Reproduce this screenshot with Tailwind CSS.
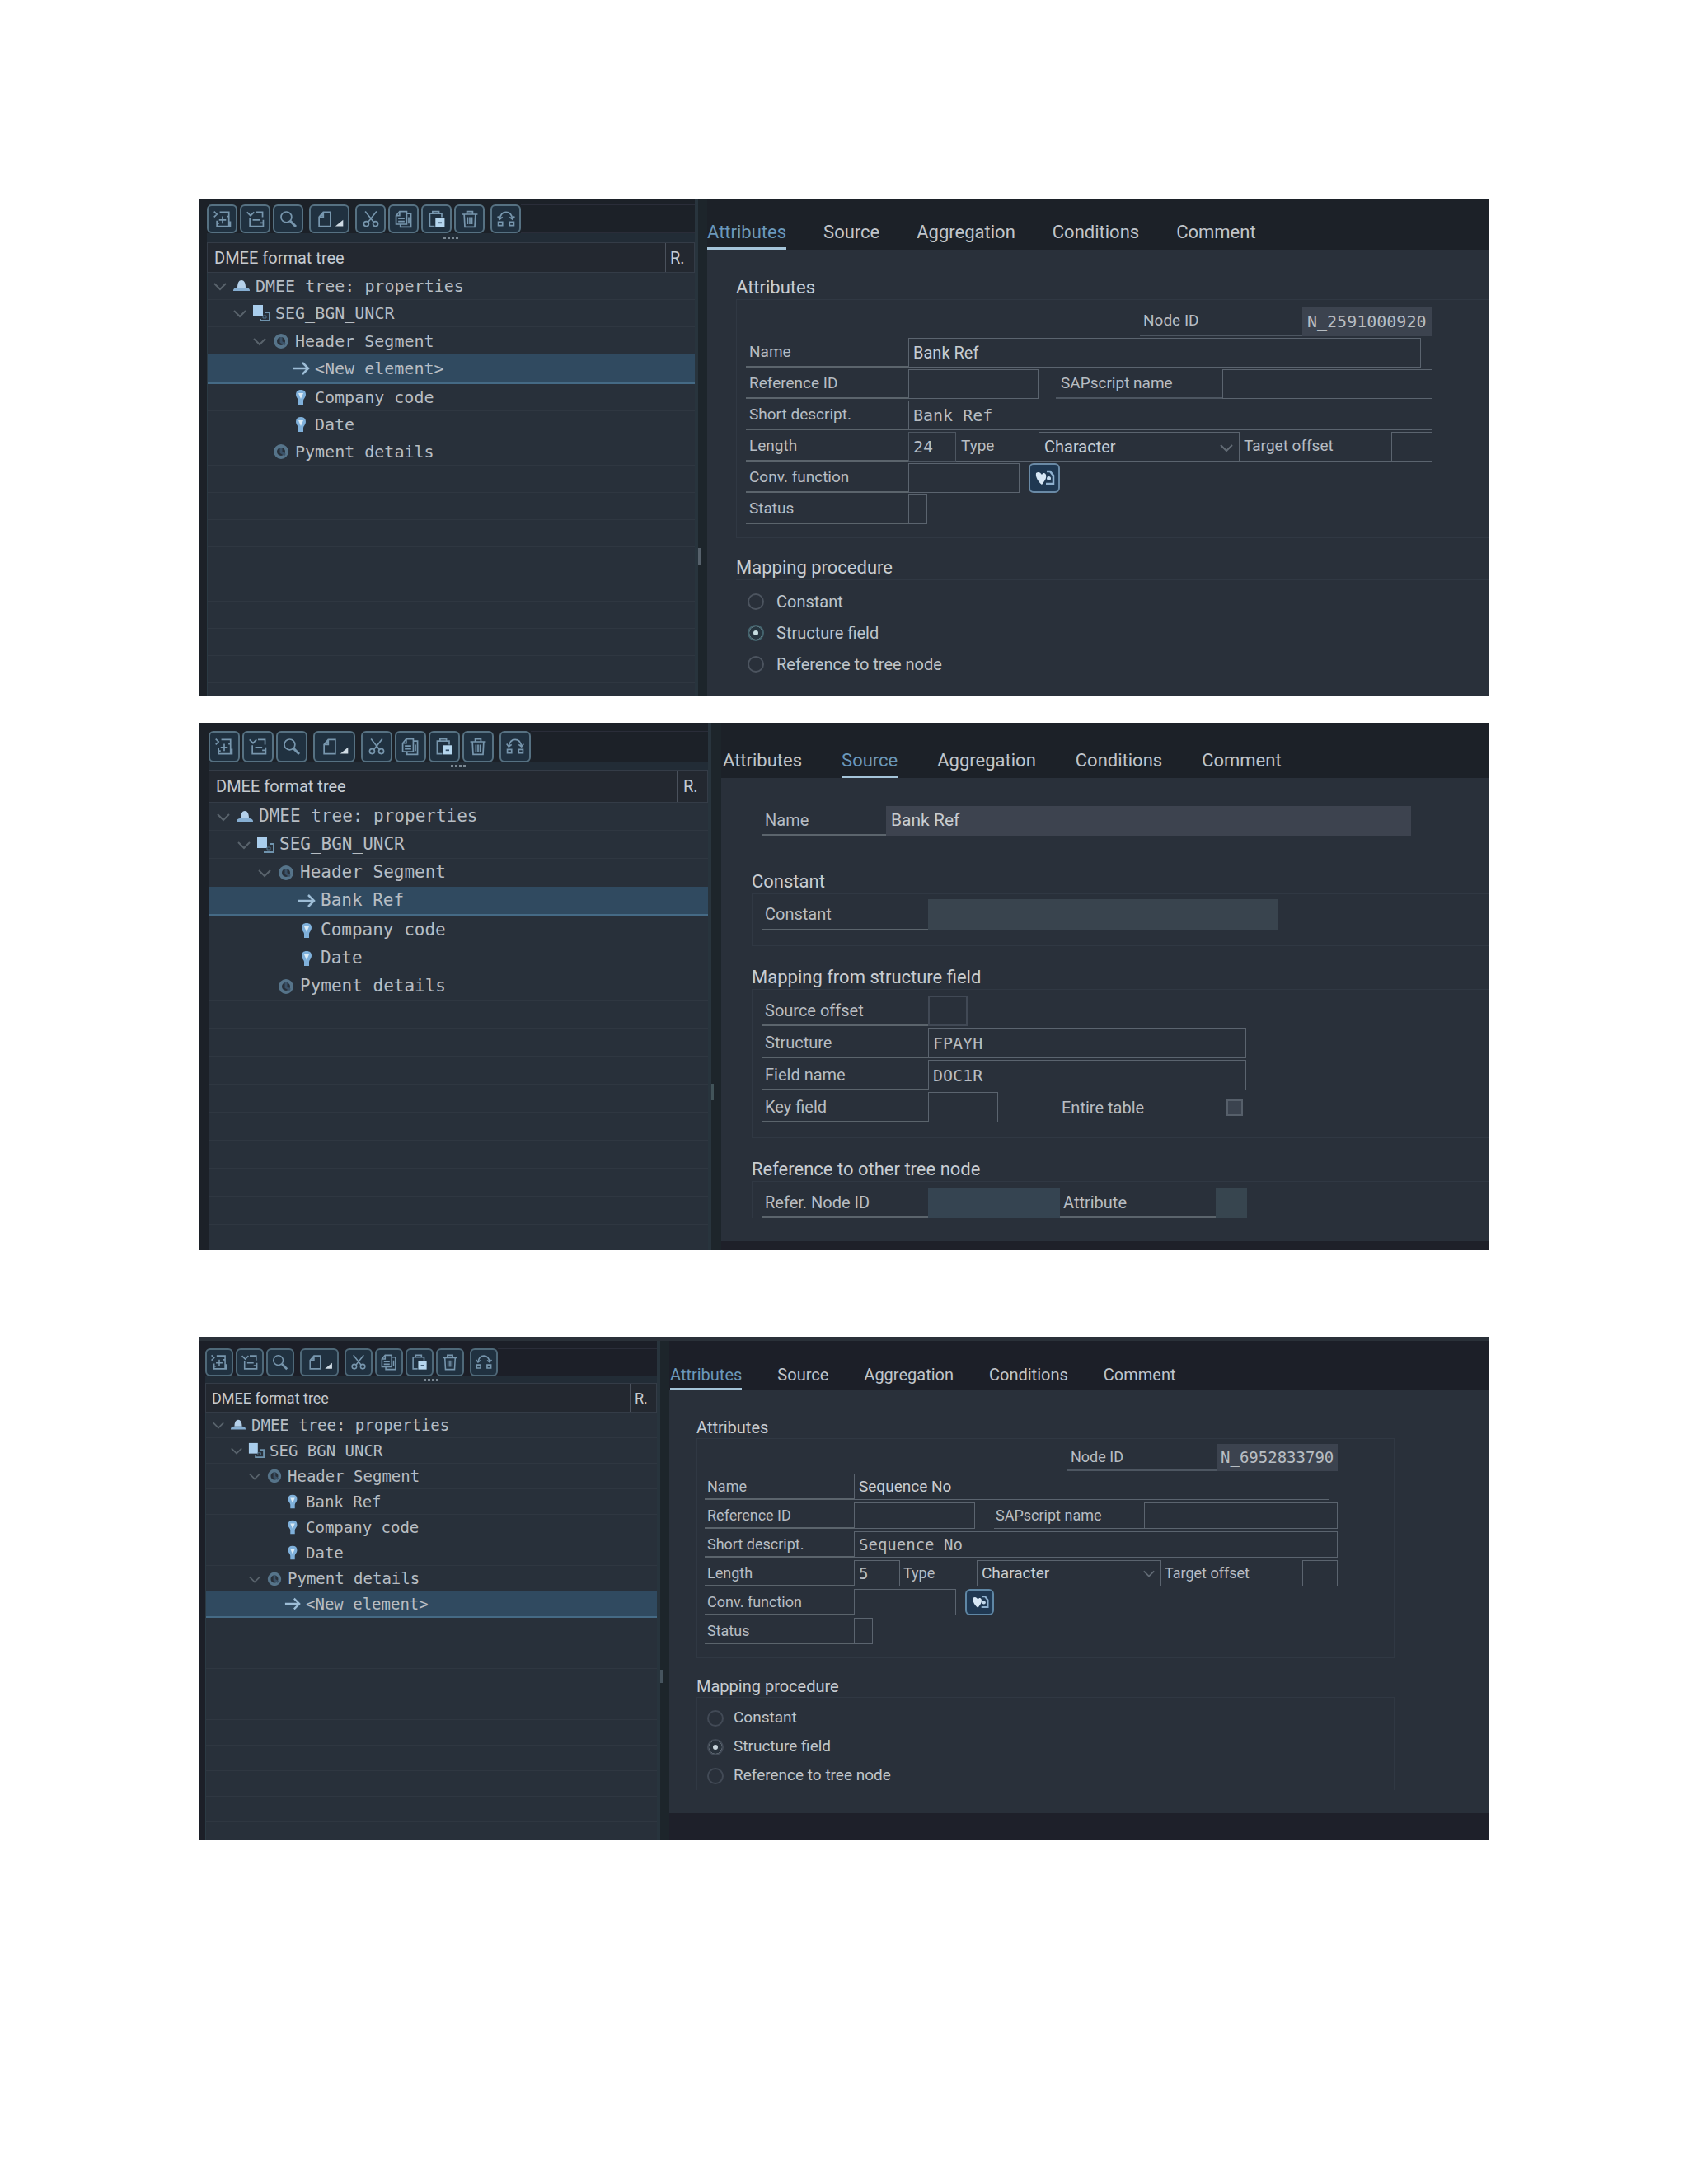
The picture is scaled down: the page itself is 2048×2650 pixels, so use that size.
<!DOCTYPE html>
<html lang="en">
<head>
	<meta charset="utf-8">
	<title>DMEE format tree</title>
	<script src="https://cdn.jsdelivr.net/npm/@tailwindcss/browser@4"></script>
</head>
<body class="min-h-screen bg-white px-[241px] pt-[241px] pb-[419px] font-['Roboto','Noto_Sans',sans-serif] text-[#b7bdc3]">

	<!-- icons shared by all three screens -->
	<svg class="hidden" xmlns="http://www.w3.org/2000/svg">
		<symbol id="i-expand" viewBox="0 0 28 28" fill="none" stroke="currentColor" stroke-width="2"><path d="M2 3l4 4-4 4M10 4h13v20H6v-8M18 24h7V17M14 10v10M9 15h10M6 20h3M20 10h4"/></symbol>
		<symbol id="i-collapse" viewBox="0 0 28 28" fill="none" stroke="currentColor" stroke-width="2"><path d="M2 4l5 5 5-5M14 4h10v7M6 12v12h19V15M10 15h10M20 19h4"/></symbol>
		<symbol id="i-search" viewBox="0 0 28 28" fill="none" stroke="currentColor" stroke-width="2"><circle cx="11" cy="11" r="7.5"/><path d="M16.500 16.500l8 8" stroke-width="3.500"/></symbol>
		<symbol id="i-new" viewBox="0 0 40 28"><path d="M11 4h10v20H5V11zM11 4v7H5" fill="none" stroke="currentColor" stroke-width="2"/><path d="M5 10l6-6v6z" fill="currentColor"/><path d="M39 15v9H28z" fill="#cfdbe4"/></symbol>
		<symbol id="i-cut" viewBox="0 0 28 28" fill="none" stroke="currentColor" stroke-width="2"><path d="M6 3l12 15M22 3L10 18"/><circle cx="7.500" cy="20.500" r="3.500"/><circle cx="20.500" cy="20.500" r="3.500"/></symbol>
		<symbol id="i-copy" viewBox="0 0 28 28" fill="none" stroke="currentColor" stroke-width="2"><path d="M8 3h10v18H3V9zM8 3v6H3M18 6h6v19H9v-4M6 13h9M6 17h9M21 11v9"/></symbol>
		<symbol id="i-paste" viewBox="0 0 28 28"><path d="M11 24H4V6h17v5M8 6V3h9v3" fill="none" stroke="currentColor" stroke-width="2"/><path d="M12 12h13v13H12z" fill="#b5d6ee"/><path d="M16 19h5" stroke="#35506a" stroke-width="2"/></symbol>
		<symbol id="i-trash" viewBox="0 0 28 28" fill="none" stroke="currentColor" stroke-width="2"><path d="M3 7h22M10 7V3h8v4M6 7l1 18h14l1-18M11 11v10M14 11v10M17 11v10"/></symbol>
		<symbol id="i-nodes" viewBox="0 0 28 28" fill="none" stroke="currentColor" stroke-width="2"><path d="M5 14C6 7 10 4 14 4s8 3 9 10M2 10l3 4 4-3M26 10l-3 4-4-3"/><path d="M3 18h6v5H3zM19 18h6v5h-6z"/></symbol>
		<symbol id="i-chevron" viewBox="0 0 18 18" fill="none" stroke="currentColor" stroke-width="2"><path d="M2 6l7 7 7-7"/></symbol>
		<symbol id="i-root" viewBox="0 0 22 22"><path d="M6 13c0-6 2-9 5-9s5 3 5 9z" fill="#b4d0ea"/><path d="M1 17c0-3 2-4 5-4h10c3 0 5 1 5 4z" fill="#86aed2"/></symbol>
		<symbol id="i-segment" viewBox="0 0 22 22"><path d="M1 1h12v14H1z" fill="#a9cdec"/><path d="M16 10h5v10H10v-2" fill="none" stroke="#6f93ad" stroke-width="2"/><path d="M13 14h4v3h-4z" fill="none" stroke="#52728b"/></symbol>
		<symbol id="i-group" viewBox="0 0 22 22"><circle cx="11" cy="11" r="7" fill="none" stroke="#56748a" stroke-width="4"/><path d="M11 6v6l5 3" fill="none" stroke="#3b5268" stroke-width="3"/></symbol>
		<symbol id="i-arrow" viewBox="0 0 22 22"><path d="M1 11h19M13 4l7 7-7 7" fill="none" stroke="#9dbdd6" stroke-width="2.500"/></symbol>
		<symbol id="i-pin" viewBox="0 0 22 22"><path d="M11 2c4 0 6 2 6 6 0 3-3 5-3 7v5H8v-5c0-2-3-4-3-7 0-4 2-6 6-6z" fill="#7fb0da"/><path d="M8 6h6l-3 7z" fill="#dcebf5"/></symbol>
		<symbol id="i-check" viewBox="0 0 28 28"><path d="M4 8c3-2 5-1 7 2 2-3 4-2 5 0 1 4-1 7-5 12C7 19 3 13 4 8z" fill="#d7e7f5"/><path d="M17 6h4l4 5v10h-9" fill="none" stroke="#8fb1cf" stroke-width="2.500"/><circle cx="19.500" cy="14.500" r="2.500" fill="#c3d9ec"/></symbol>
	</svg>

	<!-- screen 1: attributes of the new "Bank Ref" element -->
	<section class="flex overflow-hidden bg-[#1c2128]">
		<aside class="flex w-[602px] shrink-0 flex-col pl-[10px]">
			<div class="flex h-[42px] pt-[7px] text-[#7796ad]">
				<div class="flex gap-[3px]">
					<button aria-label="Expand" class="flex h-[35px] w-[37px] items-center justify-center rounded-md border-2 border-[#567182] bg-[#203140]"><svg class="size-6"><use href="#i-expand"/></svg></button>
					<button aria-label="Collapse" class="flex h-[35px] w-[37px] items-center justify-center rounded-md border-2 border-[#567182] bg-[#203140]"><svg class="size-6"><use href="#i-collapse"/></svg></button>
					<button aria-label="Find" class="flex h-[35px] w-[37px] items-center justify-center rounded-md border-2 border-[#567182] bg-[#203140]"><svg class="size-6"><use href="#i-search"/></svg></button>
				</div>
				<button aria-label="Create" class="mx-[7px] flex h-[35px] w-[49px] items-center justify-center rounded-md border-2 border-[#567182] bg-[#203140]"><svg class="h-6 w-10"><use href="#i-new"/></svg></button>
				<div class="flex gap-[3px]">
					<button aria-label="Cut" class="flex h-[35px] w-[37px] items-center justify-center rounded-md border-2 border-[#567182] bg-[#203140]"><svg class="size-6"><use href="#i-cut"/></svg></button>
					<button aria-label="Copy" class="flex h-[35px] w-[37px] items-center justify-center rounded-md border-2 border-[#567182] bg-[#203140]"><svg class="size-6"><use href="#i-copy"/></svg></button>
					<button aria-label="Paste" class="flex h-[35px] w-[37px] items-center justify-center rounded-md border-2 border-[#567182] bg-[#203140]"><svg class="size-6"><use href="#i-paste"/></svg></button>
					<button aria-label="Delete" class="flex h-[35px] w-[37px] items-center justify-center rounded-md border-2 border-[#567182] bg-[#203140]"><svg class="size-6"><use href="#i-trash"/></svg></button>
				</div>
				<button aria-label="Hierarchy" class="ml-[7px] flex h-[35px] w-[37px] items-center justify-center rounded-md border-2 border-[#567182] bg-[#203140]"><svg class="size-6"><use href="#i-nodes"/></svg></button>
				<div class="flex-1 border-y border-[#2a2d39]"></div>
			</div>
			<div class="flex h-[11px] items-center justify-center gap-[2px] bg-[#222c36]">
				<i class="size-[3px] bg-[#7b8893]"></i><i class="size-[3px] bg-[#7b8893]"></i><i class="size-[3px] bg-[#7b8893]"></i><i class="size-[3px] bg-[#7b8893]"></i>
			</div>
			<div class="flex h-[37px] items-center border border-[#343c47] bg-[#232830] text-[20px] text-[#c6cbd0]">
				<span class="flex-1 pl-2">DMEE format tree</span>
				<span class="flex h-full w-[35px] items-center border-l border-[#4a515c] pl-[5px]">R.</span>
			</div>
			<ul role="tree" class="border-l border-[#2b3a44] bg-[#28303a] font-['DejaVu_Sans_Mono',monospace] text-[20px]">
				<li role="treeitem" class="flex h-[33px] items-center border-b border-[#2f3741] pl-[6px]"><svg class="mr-[6px] size-[18px] text-[#59636c]"><use href="#i-chevron"/></svg><svg class="mr-[6px] size-[22px]"><use href="#i-root"/></svg>DMEE tree: properties</li>
				<li role="treeitem" class="flex h-[33px] items-center border-b border-[#2f3741] pl-[30px]"><svg class="mr-[6px] size-[18px] text-[#59636c]"><use href="#i-chevron"/></svg><svg class="mr-[6px] size-[22px]"><use href="#i-segment"/></svg>SEG_BGN_UNCR</li>
				<li role="treeitem" class="flex h-[33px] items-center pl-[54px]"><svg class="mr-[6px] size-[18px] text-[#59636c]"><use href="#i-chevron"/></svg><svg class="mr-[6px] size-[22px]"><use href="#i-group"/></svg>Header Segment</li>
				<li role="treeitem" aria-selected="true" class="flex h-[36px] items-center border-b-3 border-[#456a85] bg-[#304a60] pl-[102px]"><svg class="mr-[6px] size-[22px]"><use href="#i-arrow"/></svg>&lt;New element&gt;</li>
				<li role="treeitem" class="flex h-[33px] items-center border-b border-[#2f3741] pl-[102px]"><svg class="mr-[6px] size-[22px]"><use href="#i-pin"/></svg>Company code</li>
				<li role="treeitem" class="flex h-[33px] items-center border-b border-[#2f3741] pl-[102px]"><svg class="mr-[6px] size-[22px]"><use href="#i-pin"/></svg>Date</li>
				<li role="treeitem" class="flex h-[33px] items-center border-b border-[#2f3741] pl-[78px]"><svg class="mr-[6px] size-[22px]"><use href="#i-group"/></svg>Pyment details</li>
			</ul>
			<div class="flex-1 border-l border-[#2b3a44] bg-[repeating-linear-gradient(#28303a_0_32px,#2f3741_32px_33px)]"></div>
		</aside>
		<div class="w-[15px] shrink-0 border-l-4 border-[#28343d] bg-[#1d252b] pt-[424px]"><div class="h-5 w-[3px] bg-[#56616b]"></div></div>
		<main class="flex min-w-0 flex-1 flex-col">
			<nav role="tablist" class="flex h-[62px] items-end gap-[45px] text-[22px] leading-[28px] text-[#c0c5ca]">
				<button role="tab" aria-selected="true" class="border-b-3 border-[#a5c4d9] pb-1 text-[#6b98ba]">Attributes</button>
				<button role="tab" class="border-b-3 border-transparent pb-1">Source</button>
				<button role="tab" class="border-b-3 border-transparent pb-1">Aggregation</button>
				<button role="tab" class="border-b-3 border-transparent pb-1">Conditions</button>
				<button role="tab" class="border-b-3 border-transparent pb-1">Comment</button>
			</nav>
			<form class="flex-1 bg-[#29303a] pt-8 pb-5 pl-[35px] text-[19px]">
				<h2 class="text-[22px] leading-[28px] text-[#c8cdd2]">Attributes</h2>
				<div class="border-y border-l border-[#303843] pt-2 pb-4 pl-[11px]">
					<div class="w-[833px]">
						<div class="flex h-9 justify-end">
							<label for="a-node" class="flex w-[197px] items-center border-b-2 border-[#4d5661] pl-1">Node ID</label>
							<input id="a-node" readonly value="N_2591000920" class="w-[158px] bg-[#3c434f] px-[6px] font-['DejaVu_Sans_Mono',monospace] text-[20px]">
						</div>
						<div class="flex h-[38px] pt-[2px]">
							<label for="a-name" class="flex w-[197px] items-center border-b-2 border-[#5b646c] pl-1">Name</label>
							<input id="a-name" value="Bank Ref" class="w-[622px] border border-[#5b646f] px-[5px] text-[20px] text-[#c8cdd2]">
						</div>
						<div class="flex h-[38px] pt-[2px]">
							<label for="a-ref" class="flex w-[197px] items-center border-b-2 border-[#5b646c] pl-1">Reference ID</label>
							<input id="a-ref" class="w-[158px] border border-[#5b646f] px-[5px]">
							<label for="a-sap" class="ml-[21px] flex w-[202px] items-center border-b-2 border-[#4d5661] pl-[6px]">SAPscript name</label>
							<input id="a-sap" class="w-[255px] border border-[#5b646f] px-[5px]">
						</div>
						<div class="flex h-[38px] pt-[2px]">
							<label for="a-short" class="flex w-[197px] items-center border-b-2 border-[#5b646c] pl-1">Short descript.</label>
							<input id="a-short" value="Bank Ref" class="min-w-0 flex-1 border border-[#5b646f] px-[5px] font-['DejaVu_Sans_Mono',monospace] text-[20px]">
						</div>
						<div class="flex h-[38px] pt-[2px]">
							<label for="a-len" class="flex w-[197px] items-center border-b-2 border-[#5b646c] pl-1">Length</label>
							<input id="a-len" value="24" class="w-[58px] border border-[#4d5661] px-[5px] font-['DejaVu_Sans_Mono',monospace] text-[20px]">
							<label for="a-type" class="flex w-[100px] items-center border-b border-[#5b646f] pl-[6px]">Type</label>
							<div class="relative w-[244px]">
								<select id="a-type" class="h-full w-full appearance-none border border-[#5b646f] bg-transparent pl-[6px] text-[20px] text-[#c8cdd2]"><option>Character</option></select>
								<svg class="pointer-events-none absolute top-[10px] right-[7px] size-[18px] text-[#626b75]"><use href="#i-chevron"/></svg>
							</div>
							<label for="a-off" class="flex w-[184px] items-center border-b border-[#5b646f] pl-[5px]">Target offset</label>
							<input id="a-off" class="w-[50px] border border-[#5b646f]">
						</div>
						<div class="flex h-[38px] pt-[2px]">
							<label for="a-conv" class="flex w-[197px] items-center border-b-2 border-[#5b646c] pl-1">Conv. function</label>
							<input id="a-conv" class="w-[135px] border border-[#5b646f] px-[5px]">
							<button type="button" aria-label="Maintain function" class="ml-[11px] flex w-[38px] items-center justify-center rounded-md border-2 border-[#6a8aa6] bg-[#1f3852]"><svg class="size-7"><use href="#i-check"/></svg></button>
						</div>
						<div class="flex h-[38px] pt-[2px]">
							<label for="a-status" class="flex w-[197px] items-center border-b-2 border-[#5b646c] pl-1">Status</label>
							<input id="a-status" class="w-[23px] border border-[#5b646f]">
						</div>
					</div>
				</div>
				<h2 class="mt-[22px] text-[22px] leading-[28px] text-[#c8cdd2]">Mapping procedure</h2>
				<div class="border-t border-[#303843] pt-[7px] pl-[14px] text-[20px] text-[#bfc5ca]">
					<label class="flex h-[38px] items-center gap-[15px]"><input type="radio" name="map-a" class="size-5 appearance-none rounded-full border-2 border-[#4c545f] checked:border-[#44646e] checked:bg-[#c6dde0] checked:shadow-[inset_0_0_0_5px_#26353f]">Constant</label>
					<label class="flex h-[38px] items-center gap-[15px]"><input type="radio" name="map-a" checked class="size-5 appearance-none rounded-full border-2 border-[#4c545f] checked:border-[#44646e] checked:bg-[#c6dde0] checked:shadow-[inset_0_0_0_5px_#26353f]">Structure field</label>
					<label class="flex h-[38px] items-center gap-[15px]"><input type="radio" name="map-a" class="size-5 appearance-none rounded-full border-2 border-[#4c545f] checked:border-[#44646e] checked:bg-[#c6dde0] checked:shadow-[inset_0_0_0_5px_#26353f]">Reference to tree node</label>
				</div>
			</form>
		</main>
	</section>

	<!-- screen 2: source of "Bank Ref" -->
	<section class="mt-8 flex overflow-hidden bg-[#1c2128]">
		<aside class="flex w-[618px] shrink-0 flex-col pl-[12px]">
			<div class="flex h-[48px] pt-[10px] text-[#7796ad]">
				<div class="flex gap-[3px]">
					<button aria-label="Expand" class="flex h-[38px] w-[38px] items-center justify-center rounded-md border-2 border-[#567182] bg-[#203140]"><svg class="size-6"><use href="#i-expand"/></svg></button>
					<button aria-label="Collapse" class="flex h-[38px] w-[38px] items-center justify-center rounded-md border-2 border-[#567182] bg-[#203140]"><svg class="size-6"><use href="#i-collapse"/></svg></button>
					<button aria-label="Find" class="flex h-[38px] w-[38px] items-center justify-center rounded-md border-2 border-[#567182] bg-[#203140]"><svg class="size-6"><use href="#i-search"/></svg></button>
				</div>
				<button aria-label="Create" class="mx-[7px] flex h-[38px] w-[51px] items-center justify-center rounded-md border-2 border-[#567182] bg-[#203140]"><svg class="h-6 w-10"><use href="#i-new"/></svg></button>
				<div class="flex gap-[3px]">
					<button aria-label="Cut" class="flex h-[38px] w-[38px] items-center justify-center rounded-md border-2 border-[#567182] bg-[#203140]"><svg class="size-6"><use href="#i-cut"/></svg></button>
					<button aria-label="Copy" class="flex h-[38px] w-[38px] items-center justify-center rounded-md border-2 border-[#567182] bg-[#203140]"><svg class="size-6"><use href="#i-copy"/></svg></button>
					<button aria-label="Paste" class="flex h-[38px] w-[38px] items-center justify-center rounded-md border-2 border-[#567182] bg-[#203140]"><svg class="size-6"><use href="#i-paste"/></svg></button>
					<button aria-label="Delete" class="flex h-[38px] w-[38px] items-center justify-center rounded-md border-2 border-[#567182] bg-[#203140]"><svg class="size-6"><use href="#i-trash"/></svg></button>
				</div>
				<button aria-label="Hierarchy" class="ml-[7px] flex h-[38px] w-[38px] items-center justify-center rounded-md border-2 border-[#567182] bg-[#203140]"><svg class="size-6"><use href="#i-nodes"/></svg></button>
				<div class="flex-1 border-y border-[#2a2d39]"></div>
			</div>
			<div class="flex h-[9px] items-center justify-center gap-[2px] bg-[#222c36]">
				<i class="size-[3px] bg-[#7b8893]"></i><i class="size-[3px] bg-[#7b8893]"></i><i class="size-[3px] bg-[#7b8893]"></i><i class="size-[3px] bg-[#7b8893]"></i>
			</div>
			<div class="flex h-[40px] items-center border border-[#343c47] bg-[#232830] text-[20px] text-[#c6cbd0]">
				<span class="flex-1 pl-2">DMEE format tree</span>
				<span class="flex h-full w-[37px] items-center border-l border-[#4a515c] pl-[7px]">R.</span>
			</div>
			<ul role="tree" class="border-l border-[#2b3a44] bg-[#28303a] font-['DejaVu_Sans_Mono',monospace] text-[21px]">
				<li role="treeitem" class="flex h-[34px] items-center border-b border-[#2f3741] pl-[8px]"><svg class="mr-[6px] size-[18px] text-[#59636c]"><use href="#i-chevron"/></svg><svg class="mr-[6px] size-[22px]"><use href="#i-root"/></svg>DMEE tree: properties</li>
				<li role="treeitem" class="flex h-[34px] items-center border-b border-[#2f3741] pl-[33px]"><svg class="mr-[6px] size-[18px] text-[#59636c]"><use href="#i-chevron"/></svg><svg class="mr-[6px] size-[22px]"><use href="#i-segment"/></svg>SEG_BGN_UNCR</li>
				<li role="treeitem" class="flex h-[34px] items-center pl-[58px]"><svg class="mr-[6px] size-[18px] text-[#59636c]"><use href="#i-chevron"/></svg><svg class="mr-[6px] size-[22px]"><use href="#i-group"/></svg>Header Segment</li>
				<li role="treeitem" aria-selected="true" class="flex h-[36px] items-center border-b-3 border-[#456a85] bg-[#304a60] pl-[107px]"><svg class="mr-[6px] size-[22px]"><use href="#i-arrow"/></svg>Bank Ref</li>
				<li role="treeitem" class="flex h-[34px] items-center border-b border-[#2f3741] pl-[107px]"><svg class="mr-[6px] size-[22px]"><use href="#i-pin"/></svg>Company code</li>
				<li role="treeitem" class="flex h-[34px] items-center border-b border-[#2f3741] pl-[107px]"><svg class="mr-[6px] size-[22px]"><use href="#i-pin"/></svg>Date</li>
				<li role="treeitem" class="flex h-[34px] items-center border-b border-[#2f3741] pl-[82px]"><svg class="mr-[6px] size-[22px]"><use href="#i-group"/></svg>Pyment details</li>
			</ul>
			<div class="flex-1 border-l border-[#2b3a44] bg-[repeating-linear-gradient(#28303a_0_33px,#2f3741_33px_34px)]"></div>
		</aside>
		<div class="w-[16px] shrink-0 border-l-4 border-[#28343d] bg-[#1d252b] pt-[438px]"><div class="h-5 w-[3px] bg-[#42545a]"></div></div>
		<main class="flex min-w-0 flex-1 flex-col">
			<nav role="tablist" class="flex h-[67px] items-end gap-[48px] pl-[2px] text-[22px] leading-[28px] text-[#c0c5ca]">
				<button role="tab" class="border-b-3 border-transparent pb-1">Attributes</button>
				<button role="tab" aria-selected="true" class="border-b-3 border-[#a5c4d9] pb-1 text-[#6b98ba]">Source</button>
				<button role="tab" class="border-b-3 border-transparent pb-1">Aggregation</button>
				<button role="tab" class="border-b-3 border-transparent pb-1">Conditions</button>
				<button role="tab" class="border-b-3 border-transparent pb-1">Comment</button>
			</nav>
			<form class="bg-[#29303a] pt-8 pb-7 pl-[37px] text-[20px]">
				<div class="flex h-[38px] pt-[2px] pl-[13px]">
					<label for="s-name" class="flex w-[150px] items-center border-b-2 border-[#5b646c] pl-[3px]">Name</label>
					<input id="s-name" readonly value="Bank Ref" class="w-[637px] bg-[#3d434f] px-[6px] text-[21px] text-[#c8cdd2]">
				</div>
				<h2 class="mt-[42px] text-[22px] leading-[28px] text-[#c8cdd2]">Constant</h2>
				<div class="border-y border-l border-[#303843] pt-[6px] pb-[18px] pl-3">
					<div class="flex h-[38px]">
						<label for="s-const" class="flex w-[201px] items-center border-b-2 border-[#5b646c] pl-[3px]">Constant</label>
						<input id="s-const" readonly class="w-[424px] bg-[#39444e]">
					</div>
				</div>
				<h2 class="mt-6 text-[22px] leading-[28px] text-[#c8cdd2]">Mapping from structure field</h2>
				<div class="border-y border-l border-[#303843] pt-[5px] pb-[18px] pl-3">
					<div class="flex h-[39px] pt-[2px]">
						<label for="s-off" class="flex w-[201px] items-center border-b-2 border-[#5b646c] pl-[3px]">Source offset</label>
						<input id="s-off" class="w-[48px] border-2 border-[#414955]">
					</div>
					<div class="flex h-[39px] pt-[2px]">
						<label for="s-struct" class="flex w-[201px] items-center border-b-2 border-[#5b646c] pl-[3px]">Structure</label>
						<input id="s-struct" value="FPAYH" class="w-[386px] border border-[#5b646f] px-[5px] font-['DejaVu_Sans_Mono',monospace] text-[20px]">
					</div>
					<div class="flex h-[39px] pt-[2px]">
						<label for="s-field" class="flex w-[201px] items-center border-b-2 border-[#5b646c] pl-[3px]">Field name</label>
						<input id="s-field" value="DOC1R" class="w-[386px] border border-[#5b646f] px-[5px] font-['DejaVu_Sans_Mono',monospace] text-[20px]">
					</div>
					<div class="flex h-[39px] pt-[2px]">
						<label for="s-key" class="flex w-[201px] items-center border-b-2 border-[#5b646c] pl-[3px]">Key field</label>
						<input id="s-key" class="w-[85px] border border-[#5b646f] px-[5px]">
						<label for="s-all" class="ml-[77px] flex w-[200px] items-center">Entire table</label>
						<input id="s-all" type="checkbox" class="size-5 appearance-none self-center border-2 border-[#565f6a] bg-[#3b434f]">
					</div>
				</div>
				<h2 class="mt-6 text-[22px] leading-[28px] text-[#c8cdd2]">Reference to other tree node</h2>
				<div class="border-t border-l border-[#303843] pt-[5px] pl-3">
					<div class="flex h-[39px] pt-[2px]">
						<label for="s-ref" class="flex w-[201px] items-center border-b-2 border-[#5b646c] pl-[3px]">Refer. Node ID</label>
						<input id="s-ref" readonly class="w-[160px] bg-[#354451]">
						<label for="s-attr" class="flex w-[189px] items-center border-b-2 border-[#5b646c] pl-1">Attribute</label>
						<input id="s-attr" readonly class="w-[38px] bg-[#37454f]">
					</div>
				</div>
			</form>
			<div class="h-[11px] bg-[#1e2029]"></div>
		</main>
	</section>

	<!-- screen 3: attributes of the new "Sequence No" element -->
	<section class="mt-[105px] flex overflow-hidden border-t-5 border-[#2a3139] bg-[#1c1f28]">
		<aside class="flex w-[556px] shrink-0 flex-col pl-[8px]">
			<div class="flex h-[43px] pt-[9px] text-[#7796ad]">
				<div class="flex gap-[3px]">
					<button aria-label="Expand" class="flex h-[34px] w-[34px] items-center justify-center rounded-md border-2 border-[#4f6979] bg-[#203140]"><svg class="size-[22px]"><use href="#i-expand"/></svg></button>
					<button aria-label="Collapse" class="flex h-[34px] w-[34px] items-center justify-center rounded-md border-2 border-[#4f6979] bg-[#203140]"><svg class="size-[22px]"><use href="#i-collapse"/></svg></button>
					<button aria-label="Find" class="flex h-[34px] w-[34px] items-center justify-center rounded-md border-2 border-[#4f6979] bg-[#203140]"><svg class="size-[22px]"><use href="#i-search"/></svg></button>
				</div>
				<button aria-label="Create" class="mx-[7px] flex h-[34px] w-[47px] items-center justify-center rounded-md border-2 border-[#4f6979] bg-[#203140]"><svg class="h-[22px] w-[38px]"><use href="#i-new"/></svg></button>
				<div class="flex gap-[3px]">
					<button aria-label="Cut" class="flex h-[34px] w-[34px] items-center justify-center rounded-md border-2 border-[#4f6979] bg-[#203140]"><svg class="size-[22px]"><use href="#i-cut"/></svg></button>
					<button aria-label="Copy" class="flex h-[34px] w-[34px] items-center justify-center rounded-md border-2 border-[#4f6979] bg-[#203140]"><svg class="size-[22px]"><use href="#i-copy"/></svg></button>
					<button aria-label="Paste" class="flex h-[34px] w-[34px] items-center justify-center rounded-md border-2 border-[#4f6979] bg-[#203140]"><svg class="size-[22px]"><use href="#i-paste"/></svg></button>
					<button aria-label="Delete" class="flex h-[34px] w-[34px] items-center justify-center rounded-md border-2 border-[#4f6979] bg-[#203140]"><svg class="size-[22px]"><use href="#i-trash"/></svg></button>
				</div>
				<button aria-label="Hierarchy" class="ml-[7px] flex h-[34px] w-[34px] items-center justify-center rounded-md border-2 border-[#4f6979] bg-[#203140]"><svg class="size-[22px]"><use href="#i-nodes"/></svg></button>
				<div class="flex-1 border-y border-[#2a2d39]"></div>
			</div>
			<div class="flex h-[8px] items-center justify-center gap-[2px] bg-[#222c36]">
				<i class="size-[3px] bg-[#7b8893]"></i><i class="size-[3px] bg-[#7b8893]"></i><i class="size-[3px] bg-[#7b8893]"></i><i class="size-[3px] bg-[#7b8893]"></i>
			</div>
			<div class="flex h-[36px] items-center border border-[#343c47] bg-[#232830] text-[18px] text-[#c6cbd0]">
				<span class="flex-1 pl-[7px]">DMEE format tree</span>
				<span class="flex h-full w-[32px] items-center border-l border-[#4a515c] pl-[5px]">R.</span>
			</div>
			<ul role="tree" class="border-l border-[#2b3a44] bg-[#28303a] font-['DejaVu_Sans_Mono',monospace] text-[19px]">
				<li role="treeitem" class="flex h-[31px] items-center border-b border-[#2f3741] pl-[7px]"><svg class="mr-[6px] size-[16px] text-[#59636c]"><use href="#i-chevron"/></svg><svg class="mr-[6px] size-[20px]"><use href="#i-root"/></svg>DMEE tree: properties</li>
				<li role="treeitem" class="flex h-[31px] items-center border-b border-[#2f3741] pl-[29px]"><svg class="mr-[6px] size-[16px] text-[#59636c]"><use href="#i-chevron"/></svg><svg class="mr-[6px] size-[20px]"><use href="#i-segment"/></svg>SEG_BGN_UNCR</li>
				<li role="treeitem" class="flex h-[31px] items-center border-b border-[#2f3741] pl-[51px]"><svg class="mr-[6px] size-[16px] text-[#59636c]"><use href="#i-chevron"/></svg><svg class="mr-[6px] size-[20px]"><use href="#i-group"/></svg>Header Segment</li>
				<li role="treeitem" class="flex h-[31px] items-center border-b border-[#2f3741] pl-[95px]"><svg class="mr-[6px] size-[20px]"><use href="#i-pin"/></svg>Bank Ref</li>
				<li role="treeitem" class="flex h-[31px] items-center border-b border-[#2f3741] pl-[95px]"><svg class="mr-[6px] size-[20px]"><use href="#i-pin"/></svg>Company code</li>
				<li role="treeitem" class="flex h-[31px] items-center border-b border-[#2f3741] pl-[95px]"><svg class="mr-[6px] size-[20px]"><use href="#i-pin"/></svg>Date</li>
				<li role="treeitem" class="flex h-[31px] items-center pl-[51px]"><svg class="mr-[6px] size-[16px] text-[#59636c]"><use href="#i-chevron"/></svg><svg class="mr-[6px] size-[20px]"><use href="#i-group"/></svg>Pyment details</li>
				<li role="treeitem" aria-selected="true" class="flex h-[32px] items-center border-b-2 border-[#456a85] bg-[#304a60] pl-[95px]"><svg class="mr-[6px] size-[20px]"><use href="#i-arrow"/></svg>&lt;New element&gt;</li>
			</ul>
			<div class="flex-1 border-l border-[#2b3a44] bg-[repeating-linear-gradient(#28303a_0_30px,#2f3741_30px_31px)]"></div>
		</aside>
		<div class="w-[15px] shrink-0 border-l-4 border-[#28343d] bg-[#1d252b] pt-[399px]"><div class="h-4 w-[3px] bg-[#46545e]"></div></div>
		<main class="flex min-w-0 flex-1 flex-col">
			<nav role="tablist" class="flex h-[60px] items-end gap-[43px] pl-[1px] text-[20px] leading-[26px] text-[#c0c5ca]">
				<button role="tab" aria-selected="true" class="border-b-3 border-[#a5c4d9] pb-[3px] text-[#6b98ba]">Attributes</button>
				<button role="tab" class="border-b-3 border-transparent pb-[3px]">Source</button>
				<button role="tab" class="border-b-3 border-transparent pb-[3px]">Aggregation</button>
				<button role="tab" class="border-b-3 border-transparent pb-[3px]">Conditions</button>
				<button role="tab" class="border-b-3 border-transparent pb-[3px]">Comment</button>
			</nav>
			<form class="bg-[#29303a] pt-8 pr-[115px] pb-7 pl-[33px] text-[18px]">
				<h2 class="text-[20px] leading-[26px] text-[#c8cdd2]">Attributes</h2>
				<div class="border border-[#303843] pt-[6px] pb-4 pl-[9px]">
					<div class="w-[768px]">
						<div class="flex h-[33px] justify-end">
							<label for="c-node" class="flex w-[182px] items-center border-b-2 border-[#4d5661] pl-1">Node ID</label>
							<input id="c-node" readonly value="N_6952833790" class="w-[146px] bg-[#3c434f] px-1 font-['DejaVu_Sans_Mono',monospace] text-[19px]">
						</div>
						<div class="flex h-[35px] pt-[3px]">
							<label for="c-name" class="flex w-[181px] items-center border-b-2 border-[#5b646c] pl-[3px]">Name</label>
							<input id="c-name" value="Sequence No" class="w-[577px] border border-[#5b646f] px-[5px] text-[19px] text-[#c8cdd2]">
						</div>
						<div class="flex h-[35px] pt-[3px]">
							<label for="c-ref" class="flex w-[181px] items-center border-b-2 border-[#5b646c] pl-[3px]">Reference ID</label>
							<input id="c-ref" class="w-[147px] border border-[#5b646f] px-[5px]">
							<label for="c-sap" class="ml-[23px] flex w-[182px] items-center border-b border-[#5b646f] pl-[2px]">SAPscript name</label>
							<input id="c-sap" class="w-[235px] border border-[#5b646f] px-[5px]">
						</div>
						<div class="flex h-[35px] pt-[3px]">
							<label for="c-short" class="flex w-[181px] items-center border-b-2 border-[#5b646c] pl-[3px]">Short descript.</label>
							<input id="c-short" value="Sequence No" class="min-w-0 flex-1 border border-[#5b646f] px-[5px] font-['DejaVu_Sans_Mono',monospace] text-[19px]">
						</div>
						<div class="flex h-[35px] pt-[3px]">
							<label for="c-len" class="flex w-[181px] items-center border-b-2 border-[#5b646c] pl-[3px]">Length</label>
							<input id="c-len" value="5" class="w-[56px] border border-[#5b646f] px-[5px] font-['DejaVu_Sans_Mono',monospace] text-[19px]">
							<label for="c-type" class="flex w-[93px] items-center border-b border-[#5b646f] pl-1">Type</label>
							<div class="relative w-[224px]">
								<select id="c-type" class="h-full w-full appearance-none border border-[#5b646f] bg-transparent pl-[5px] text-[19px] text-[#c8cdd2]"><option>Character</option></select>
								<svg class="pointer-events-none absolute top-[8px] right-[7px] size-4 text-[#626b75]"><use href="#i-chevron"/></svg>
							</div>
							<label for="c-off" class="flex w-[171px] items-center border-b border-[#5b646f] pl-1">Target offset</label>
							<input id="c-off" class="w-[43px] border border-[#5b646f]">
						</div>
						<div class="flex h-[35px] pt-[3px]">
							<label for="c-conv" class="flex w-[181px] items-center border-b-2 border-[#5b646c] pl-[3px]">Conv. function</label>
							<input id="c-conv" class="w-[124px] border border-[#5b646f] px-[5px]">
							<button type="button" aria-label="Maintain function" class="ml-[11px] flex w-[35px] items-center justify-center rounded-md border-2 border-[#5f87a5] bg-[#1f3852]"><svg class="size-6"><use href="#i-check"/></svg></button>
						</div>
						<div class="flex h-[35px] pt-[3px]">
							<label for="c-status" class="flex w-[181px] items-center border-b-2 border-[#5b646c] pl-[3px]">Status</label>
							<input id="c-status" class="w-[23px] border border-[#5b646f]">
						</div>
					</div>
				</div>
				<h2 class="mt-[21px] text-[20px] leading-[26px] text-[#c8cdd2]">Mapping procedure</h2>
				<div class="border-x border-t border-[#303843] pt-[7px] pl-[12px] text-[19px] text-[#bfc5ca]">
					<label class="flex h-[35px] items-center gap-[12px]"><input type="radio" name="map-c" class="size-5 appearance-none rounded-full border-2 border-[#424a56] checked:bg-[#c9d5dc] checked:shadow-[inset_0_0_0_5px_#28313b]">Constant</label>
					<label class="flex h-[35px] items-center gap-[12px]"><input type="radio" name="map-c" checked class="size-5 appearance-none rounded-full border-2 border-[#424a56] checked:bg-[#c9d5dc] checked:shadow-[inset_0_0_0_5px_#28313b]">Structure field</label>
					<label class="flex h-[35px] items-center gap-[12px]"><input type="radio" name="map-c" class="size-5 appearance-none rounded-full border-2 border-[#424a56] checked:bg-[#c9d5dc] checked:shadow-[inset_0_0_0_5px_#28313b]">Reference to tree node</label>
				</div>
			</form>
			<div class="h-8 bg-[#1e202a]"></div>
		</main>
	</section>

</body>
</html>
